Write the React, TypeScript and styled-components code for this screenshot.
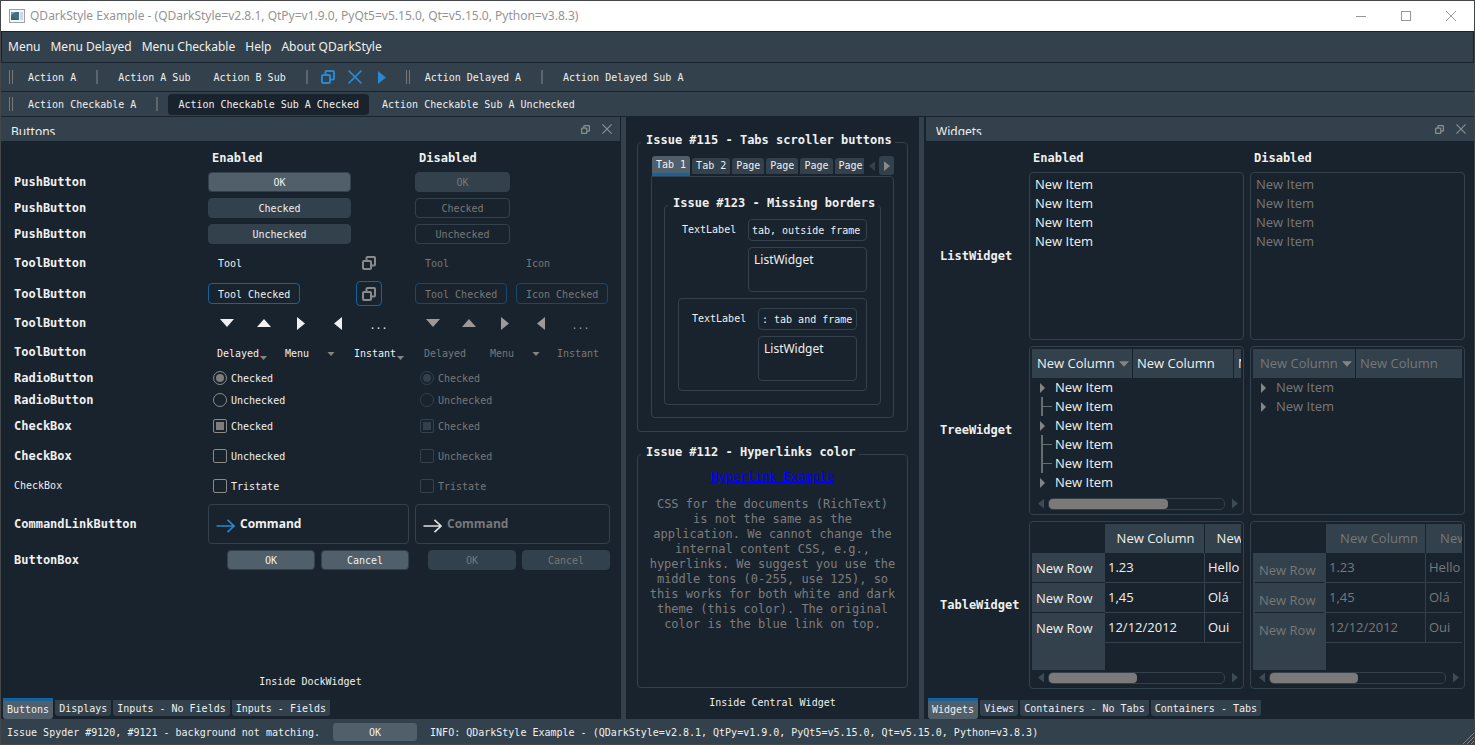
import React from "react";
import styled, { createGlobalStyle, css } from "styled-components";

const c = {
  bg: "#19232d",
  panel: "#32414b",
  raised: "#505f69",
  text: "#f0f0f0",
  muted: "#787878",
  blue: "#1464a0",
  bright: "#2a87d0",
  dimBlue: "#164870",
};

const mono = `"DejaVu Sans Mono", "Liberation Mono", monospace`;
const sans = `"Open Sans", "Noto Sans", sans-serif`;
const chromeSans = `"Noto Sans", "Open Sans", sans-serif`;

const GlobalStyle = createGlobalStyle`
  * { box-sizing: border-box; }
  body { margin: 0; background: ${c.bg}; }
  button, input { font: inherit; color: inherit; }
  ul { list-style: none; margin: 0; padding: 0; }
`;

const Window = styled.div`
  display: flex;
  flex-direction: column;
  min-height: 100vh;
  border: 1px solid #44474a;
  background: ${c.bg};
  color: ${c.text};
  font: 10px/16px ${mono};
`;

const TitleBar = styled.header`
  display: flex;
  align-items: center;
  height: 30px;
  padding: 0 1px 0 8px;
  gap: 5px;
  background: #fff;
  color: #949494;
  font: 12px/20px ${chromeSans};
`;

const WindowTitle = styled.h1`
  flex: 1;
  margin: 0;
  font: inherit;
  white-space: nowrap;
`;

const WindowControls = styled.div`
  display: flex;
`;

const WindowButton = styled.button`
  display: flex;
  align-items: center;
  justify-content: center;
  width: 45px;
  height: 30px;
  padding: 0;
  border: 0;
  background: none;
`;

const MenuBar = styled.nav`
  display: flex;
  align-items: center;
  gap: 10px;
  height: 32px;
  padding: 0 6px;
  border: 1px solid ${c.bg};
  background: ${c.panel};
  font: 12px/20px ${chromeSans};
`;

const MenuItem = styled.button`
  padding: 0;
  border: 0;
  background: none;
`;

const ToolBar = styled.div<{ $h: number }>`
  display: flex;
  align-items: center;
  gap: 3px;
  height: ${(p) => p.$h}px;
  padding-left: 1px;
  border-bottom: 1px solid ${c.bg};
  background: ${c.panel};
`;

const Handle = styled.span`
  width: 4px;
  height: 14px;
  margin: 0 2px 0 7px;
  border: solid #787878;
  border-width: 0 1px;
`;

const Separator = styled.span`
  width: 2px;
  height: 14px;
  margin: 0 7px;
  background: #5d666c;
`;

const Action = styled.button<{ $on?: boolean; $icon?: boolean }>`
  display: flex;
  align-items: center;
  justify-content: center;
  height: 21px;
  padding: ${(p) => (p.$icon ? "0 3px 0 0" : "2px 10px 0")};
  ${(p) => p.$icon && "width: 24px;"}
  border: 0;
  border-radius: 4px;
  background: ${(p) => (p.$on ? c.bg : "none")};
  color: ${(p) => (p.$icon ? c.bright : c.text)};
  white-space: nowrap;
`;

const Main = styled.main`
  flex: 1;
  display: grid;
  grid-template-columns: minmax(0, 620fr) 5px minmax(0, 293fr) 5px minmax(0, 550fr);
`;

const Splitter = styled.div`
  background: ${c.panel};
`;

const Dock = styled.section<{ $side: "left" | "right" }>`
  display: flex;
  flex-direction: column;
  padding: ${(p) => (p.$side === "left" ? "0 1px 0 0" : "0 0 0 2px")};
`;

const DockHeader = styled.header`
  display: flex;
  align-items: center;
  height: 24px;
  padding: 0 6px 0 10px;
  gap: 8px;
  background: ${c.panel};
  color: #8b8f8f;
`;

const DockTitle = styled.h2`
  flex: 1;
  align-self: flex-start;
  height: 18px;
  margin: 0;
  overflow: hidden;
  color: ${c.text};
  font: 12px/29px ${chromeSans};
`;

const BareButton = styled.button`
  display: flex;
  align-items: center;
  justify-content: center;
  width: 14px;
  height: 14px;
  padding: 0;
  border: 0;
  background: none;
`;

const ButtonsGrid = styled.div`
  display: grid;
  grid-template-columns: minmax(0, 188fr) minmax(0, 201fr) minmax(0, 195fr);
  grid-template-rows: 16px 20px 20px 20px 25px 25px 22px 24px 16px 16px 24px 24px 24px 40px 20px;
  gap: 6px;
  align-items: center;
  padding: 9px 10px 0 13px;
`;

const Bold = styled.span<{ $indent?: boolean }>`
  padding-left: ${(p) => (p.$indent ? 4 : 0)}px;
  font-size: 12px;
  font-weight: 700;
  white-space: nowrap;
`;

const Cell = styled.div<{ $end?: boolean; $muted?: boolean }>`
  display: flex;
  align-items: center;
  justify-content: ${(p) => (p.$end ? "flex-end" : "flex-start")};
  gap: 6px;
  min-width: 0;
  color: ${(p) => (p.$muted ? c.muted : c.text)};
`;

const PushButton = styled.button<{ $w: number; $kind?: "raised" | "flat" | "outline" }>`
  flex: 0 1 ${(p) => p.$w}px;
  height: 20px;
  padding: 2px 0 0;
  border: 1px solid ${c.panel};
  border-radius: 4px;
  background: ${(p) =>
    p.$kind === "raised" ? c.raised : p.$kind === "outline" ? "none" : c.panel};
  line-height: 16px;
`;

const ToolButton = styled.button<{ $checked?: boolean; $square?: boolean }>`
  display: flex;
  align-items: center;
  justify-content: center;
  height: ${(p) => (p.$square ? 25 : 21)}px;
  padding: ${(p) => (p.$square ? "0 5px" : "2px 9px 0")};
  border: 1px solid transparent;
  border-radius: 4px;
  background: none;
  white-space: nowrap;
  ${(p) => p.$checked && css`border-color: ${c.blue};`}
  &:disabled { ${(p) => p.$checked && css`border-color: ${c.dimBlue};`} }
  ${(p) => p.$square && "color: #8a8a8a;"}
`;

const ToolPair = styled(Cell)`
  display: grid;
  grid-template-columns: repeat(2, minmax(0, 1fr));
  justify-items: start;
  column-gap: 7px;
`;

const ToolSpread = styled(Cell)`
  justify-content: space-between;
  padding-right: 27px;
`;

const ArrowCell = styled.div<{ $col: number; $muted?: boolean }>`
  display: grid;
  grid-template-columns: repeat(4, ${(p) => p.$col}px) 1fr;
  justify-items: center;
  align-items: center;
  padding: 0 8px 0 0;
  color: ${(p) => (p.$muted ? "#9d9999" : c.text)};
`;

const Dots = styled.span`
  padding-top: 6px;
`;

const MenuCell = styled.div<{ $muted?: boolean }>`
  display: grid;
  grid-template-columns: minmax(0, 68fr) minmax(0, 69fr) minmax(0, 64fr);
  color: ${(p) => (p.$muted ? c.muted : c.text)};
`;

const MenuTool = styled.button<{ $wide?: boolean }>`
  display: flex;
  align-items: center;
  gap: ${(p) => (p.$wide ? 18 : 1)}px;
  height: 24px;
  padding: 4px 0 0 9px;
  border: 0;
  background: none;
  & > svg { color: #858585; ${(p) => !p.$wide && "align-self: flex-end; margin-bottom: 4px;"} }
`;

const Check = styled.label`
  display: flex;
  align-items: center;
  gap: 4px;
  padding-left: 5px;
`;

const CheckText = styled.span`
  padding-top: 1px;
`;

const Tick = styled.input`
  appearance: none;
  width: 14px;
  height: 14px;
  margin: 0;
  padding: 2px;
  border: 1px solid #8a8a88;
  border-radius: ${(p) => (p.type === "radio" ? "50%" : "2px")};
  background-clip: content-box;
  &:checked { background-color: #7d7d7a; }
  &:disabled { border-color: ${c.panel}; }
  &:disabled:checked { background-color: ${c.panel}; }
`;

const CommandButton = styled.button`
  display: flex;
  align-items: center;
  gap: 5px;
  width: 100%;
  height: 40px;
  padding: 0 7px;
  border: 1px solid ${c.panel};
  border-radius: 4px;
  background: none;
  font: 700 12px/16px ${sans};
  color: ${c.text};
  & > svg { color: ${c.bright}; margin-top: 3px; }
  &:disabled { color: ${c.muted}; }
  &:disabled > svg { color: #e0e0e0; }
`;

const Caption = styled.p`
  margin: 0;
  text-align: center;
`;

const DockCaption = styled(Caption)`
  margin: auto 0 8px;
`;

const TabBar = styled.div`
  display: flex;
  align-items: flex-start;
  gap: 2px;
  height: 21px;
  padding-left: 2px;
`;

const DockTab = styled.button<{ $on?: boolean }>`
  height: ${(p) => (p.$on ? 21 : 16)}px;
  margin-top: ${(p) => (p.$on ? 0 : 2)}px;
  padding: 0 4px;
  border: 0;
  border-top: ${(p) => (p.$on ? 3 : 0)}px solid ${c.blue};
  border-radius: 0 0 3px 3px;
  background: ${(p) => (p.$on ? c.raised : c.panel)};
  line-height: 18px;
  white-space: nowrap;
`;

const Central = styled.section`
  display: flex;
  flex-direction: column;
  padding: 15px 11px 8px;
`;

const Group = styled.fieldset<{ $grow?: boolean }>`
  ${(p) => p.$grow && "flex: 1;"}
  min-width: 0;
  margin: 0;
  padding: 4px 13px 13px;
  border: 1px solid ${c.panel};
  border-radius: 4px;
`;

const LinksGroup = styled(Group)`
  margin: 12px 0 7px;
  padding: 6px 9px;
`;

const RichText = styled.div`
  font-size: 12px;
  line-height: 15px;
  text-align: center;
`;

const Legend = styled.legend<{ $end: number }>`
  height: 20px;
  margin-left: -10px;
  padding: 0 ${(p) => p.$end}px 0 5px;
  font-size: 12px;
  font-weight: 700;
  line-height: 16px;
  white-space: nowrap;
`;

const LinksLegend = styled(Legend)`
  margin-left: -6px;
`;

const Link = styled.a`
  color: #0000ff;
`;

const Paragraph = styled.p`
  margin: 12px 0 0;
  color: #7d7d7d;
`;

const PageTabs = styled.div`
  display: flex;
  align-items: flex-end;
  height: 20px;
  padding-left: 1px;
`;

const PageTabClip = styled.div`
  display: flex;
  flex: 1;
  align-items: flex-end;
  gap: 2px;
  height: 20px;
  overflow: hidden;
`;

const PageTab = styled.button<{ $on?: boolean }>`
  flex: none;
  height: ${(p) => (p.$on ? 20 : 16)}px;
  margin-bottom: ${(p) => (p.$on ? 0 : 2)}px;
  padding: 0 4px;
  border: 0;
  border-bottom: ${(p) => (p.$on ? 3 : 0)}px solid ${c.blue};
  border-radius: 3px 3px 0 0;
  background: ${(p) => (p.$on ? c.raised : c.panel)};
  line-height: 16px;
`;

const Scroller = styled.button<{ $on?: boolean }>`
  display: flex;
  align-items: center;
  justify-content: center;
  width: 15px;
  height: 19px;
  margin-bottom: 1px;
  padding: 0;
  border: 0;
  border-radius: 3px;
  background: ${(p) => (p.$on ? c.panel : "none")};
  color: ${(p) => (p.$on ? "#8a8a8a" : c.panel)};
`;

const Pane = styled.div`
  padding: 18px 12px 12px;
  border: 1px solid ${c.panel};
  border-radius: 0 4px 4px 4px;
`;

const Form = styled.div<{ $framed?: boolean }>`
  display: grid;
  grid-template-columns: ${(p) => (p.$framed ? "60px" : "64px")} minmax(0, 1fr);
  gap: 6px;
  align-items: center;
`;

const FieldLabel = styled.label<{ $indent?: boolean }>`
  padding-left: ${(p) => (p.$indent ? 4 : 0)}px;
`;

const Frame = styled.div`
  grid-column: 1 / -1;
  padding: 9px 9px 9px 13px;
  border: 1px solid ${c.panel};
  border-radius: 4px;
`;

const LineEdit = styled.input`
  width: 100%;
  height: 22px;
  padding: 0 3px;
  border: 1px solid ${c.panel};
  border-radius: 4px;
  background: none;
`;

const MiniList = styled.ul`
  grid-column: 2;
  height: 45px;
  padding: 2px 5px;
  border: 1px solid ${c.panel};
  border-radius: 4px;
  font: 12px/20px ${chromeSans};
`;

const WidgetsGrid = styled.div`
  flex: 1;
  display: grid;
  grid-template-columns: 83px minmax(0, 1fr) minmax(0, 1fr);
  grid-template-rows: 16px repeat(3, minmax(168px, 1fr));
  gap: 6px;
  align-items: center;
  padding: 9px 9px 9px 14px;
`;

const ViewBox = styled.div<{ $muted?: boolean }>`
  display: flex;
  flex-direction: column;
  align-self: stretch;
  min-width: 0;
  padding: 2px;
  overflow: hidden;
  border: 1px solid ${c.panel};
  border-radius: 4px;
  color: ${(p) => (p.$muted ? c.muted : c.text)};
  font: 13px/19px ${sans};
`;

const Items = styled.ul`
  padding: 0 3px;
`;

const TreeHeader = styled.div`
  display: flex;
  flex: none;
  height: 29px;
  overflow: hidden;
  background: ${c.panel};
`;

const TreeColumn = styled.div<{ $w?: number; $pad: number }>`
  display: flex;
  flex: ${(p) => (p.$w ? `0 0 ${p.$w}px` : "1 0 100px")};
  align-items: center;
  justify-content: space-between;
  padding: 0 3px 0 ${(p) => p.$pad}px;
  border-right: ${(p) => (p.$w ? 1 : 0)}px solid ${c.bg};
  white-space: nowrap;
  & > svg { color: #858585; }
`;

const TreeItems = styled.ul`
  flex: 1;
`;

const TreeItem = styled.li`
  display: flex;
  align-items: center;
  gap: 3px;
  height: 19px;
  padding-left: 6px;
  & > svg { color: #858585; flex: none; }
`;

const ScrollRow = styled.div`
  display: flex;
  align-items: center;
  gap: 4px;
  height: 16px;
  padding: 0 3px 0 6px;
  color: #3c4c57;
`;

const Track = styled.div`
  flex: 1;
  height: 12px;
  margin-right: 3px;
  border: 1px solid ${c.panel};
  border-radius: 5px;
`;

const Thumb = styled.div<{ $size: number }>`
  width: ${(p) => p.$size}%;
  height: 10px;
  border-radius: 4px;
  background: #7c7a78;
`;

const TableClip = styled.div`
  flex: 1;
  min-height: 0;
  overflow: hidden;
`;

const Table = styled.table<{ $muted?: boolean }>`
  width: 273px;
  height: 100%;
  table-layout: fixed;
  border-spacing: 0;
  text-align: left;
  th, td { height: 30px; padding: 0 3px; font-weight: 400; white-space: nowrap; }
  thead th { height: 29px; background: ${c.panel}; text-align: center; border-right: 1px solid ${c.bg}; }
  thead th { padding-left: ${(p) => (p.$muted ? 10 : 5)}px; }
  thead td { height: 29px; }
  tbody th { padding: 0 ${(p) => (p.$muted ? 2 : 0)}px; background: ${c.panel}; }
  tbody td { border: solid ${c.panel}; border-width: 0 1px 1px 0; }
  tbody tr:last-child th, tbody tr:last-child td { height: auto; border: 0; }
`;

const RowHead = styled.div<{ $muted?: boolean; $last?: boolean }>`
  height: 30px;
  padding: ${(p) => (p.$muted ? 8 : 6)}px 4px 0;
  border-bottom: ${(p) => (p.$last ? 0 : 1)}px solid ${c.bg};
`;

const StatusBar = styled.footer`
  display: flex;
  align-items: center;
  gap: 12px;
  height: 25px;
  padding: 0 0 0 6px;
  background: ${c.panel};
  white-space: nowrap;
`;

const StatusText = styled.span`
  padding-top: 2px;
`;

const Grip = styled.svg`
  align-self: flex-end;
  margin-left: auto;
`;

const TriDown = ({ w = 14, h = 8 }: { w?: number; h?: number }) => (
  <svg width={w} height={h} viewBox="0 0 14 8"><path d="M0 0H14L7 8Z" fill="currentColor" /></svg>
);
const TriUp = () => (
  <svg width="14" height="8" viewBox="0 0 14 8"><path d="M0 8H14L7 0Z" fill="currentColor" /></svg>
);
const TriRight = ({ w = 8, h = 13 }: { w?: number; h?: number }) => (
  <svg width={w} height={h} viewBox="0 0 8 13"><path d="M0 0V13L8 6.5Z" fill="currentColor" /></svg>
);
const TriLeft = ({ w = 8, h = 13 }: { w?: number; h?: number }) => (
  <svg width={w} height={h} viewBox="0 0 8 13"><path d="M8 0V13L0 6.5Z" fill="currentColor" /></svg>
);
const Restore = ({ size = 14 }: { size?: number }) => (
  <svg width={size} height={size} viewBox="0 0 14 14" fill="none" stroke="currentColor" strokeWidth="2">
    <path d="M4.5 5V1.9Q4.5 1 5.4 1H12.1Q13 1 13 1.9V8.6Q13 9.5 12.1 9.5H9.5" />
    <rect x="1" y="5" width="8" height="8" rx="1" />
  </svg>
);
const Cross = ({ size = 14 }: { size?: number }) => (
  <svg width={size} height={size} viewBox="0 0 14 14" fill="none" stroke="currentColor" strokeWidth="1.7">
    <path d="M.6.6 13.4 13.4M13.4.6.6 13.4" />
  </svg>
);
const ArrowLong = () => (
  <svg width="19" height="14" viewBox="0 0 19 14" fill="none" stroke="currentColor" strokeWidth="1.6">
    <path d="M.5 7H18M11.5 .8 18 7 11.5 13.2" />
  </svg>
);
const Branch = () => (
  <svg width="14" height="19" viewBox="0 0 14 19" fill="none" stroke="#666c70">
    <path d="M4 0V19" strokeWidth="2" /><path d="M4 9.5H14" />
  </svg>
);
const Expander = () => (
  <svg width="14" height="10" viewBox="0 0 14 10"><path d="M2 0V10L7 5Z" fill="currentColor" /></svg>
);

const AppIcon = () => (
  <svg width="16" height="14" viewBox="0 0 16 14">
    <rect x=".5" y=".5" width="15" height="13" fill="#f2f4f6" stroke="#9aa2a8" />
    <rect x="2" y="3" width="8" height="8" fill="#3e6f86" />
    <path d="M2 11V7L10 11Z" fill="#3f6650" />
    <path d="M2 3H7L2 6Z" fill="#6f9fc4" />
    <rect x="11" y="3" width="3" height="8" fill="#d2d6dd" />
  </svg>
);

function ScrollBar({ size }: { size: number }) {
  return (
    <ScrollRow>
      <TriLeft w={6} h={11} />
      <Track><Thumb $size={size} /></Track>
      <TriRight w={6} h={11} />
    </ScrollRow>
  );
}

function DockHead({ title }: { title: string }) {
  return (
    <DockHeader>
      <DockTitle>{title}</DockTitle>
      <BareButton aria-label={`Float ${title}`}><Restore size={9} /></BareButton>
      <BareButton aria-label={`Close ${title}`}><Cross size={10} /></BareButton>
    </DockHeader>
  );
}

function DockTabs({ names }: { names: string[] }) {
  return (
    <TabBar>
      {names.map((n, i) => <DockTab key={n} $on={i === 0}>{n}</DockTab>)}
    </TabBar>
  );
}

function Arrows({ muted }: { muted?: boolean }) {
  return (
    <ArrowCell $col={muted ? 36 : 37} $muted={muted}>
      <TriDown /><TriUp /><TriRight /><TriLeft /><Dots>...</Dots>
    </ArrowCell>
  );
}

function Menus({ muted }: { muted?: boolean }) {
  return (
    <MenuCell $muted={muted}>
      <MenuTool disabled={muted}>Delayed{!muted && <TriDown w={7} h={4} />}</MenuTool>
      <MenuTool disabled={muted} $wide>Menu<TriDown w={8} h={4} /></MenuTool>
      <MenuTool disabled={muted}>Instant{!muted && <TriDown w={7} h={4} />}</MenuTool>
    </MenuCell>
  );
}

type TickRow = { label: string; type: "radio" | "checkbox"; text: string; on?: boolean; plain?: boolean };
const tickRows: TickRow[] = [
  { label: "RadioButton", type: "radio", text: "Checked", on: true },
  { label: "RadioButton", type: "radio", text: "Unchecked" },
  { label: "CheckBox", type: "checkbox", text: "Checked", on: true },
  { label: "CheckBox", type: "checkbox", text: "Unchecked" },
  { label: "CheckBox", type: "checkbox", text: "Tristate", plain: true },
];

function ButtonsDock() {
  return (
    <Dock $side="left">
      <DockHead title="Buttons" />
      <ButtonsGrid>
        <span /><Bold $indent>Enabled</Bold><Bold $indent>Disabled</Bold>

        <Bold>PushButton</Bold>
        <Cell><PushButton $w={143} $kind="raised">OK</PushButton></Cell>
        <Cell $muted><PushButton $w={95} disabled>OK</PushButton></Cell>
        {["Checked", "Unchecked"].map((t) => (
          <React.Fragment key={t}>
            <Bold>PushButton</Bold>
            <Cell><PushButton $w={143}>{t}</PushButton></Cell>
            <Cell $muted><PushButton $w={95} $kind="outline" disabled>{t}</PushButton></Cell>
          </React.Fragment>
        ))}

        <Bold>ToolButton</Bold>
        <ToolSpread>
          <ToolButton>Tool</ToolButton>
          <ToolButton $square aria-label="Icon"><Restore /></ToolButton>
        </ToolSpread>
        <ToolPair $muted>
          <ToolButton disabled>Tool</ToolButton>
          <ToolButton disabled>Icon</ToolButton>
        </ToolPair>

        <Bold>ToolButton</Bold>
        <ToolSpread>
          <ToolButton $checked>Tool Checked</ToolButton>
          <ToolButton $square $checked aria-label="Icon Checked"><Restore /></ToolButton>
        </ToolSpread>
        <ToolPair $muted>
          <ToolButton $checked disabled>Tool Checked</ToolButton>
          <ToolButton $checked disabled>Icon Checked</ToolButton>
        </ToolPair>

        <Bold>ToolButton</Bold><Arrows /><Arrows muted />
        <Bold>ToolButton</Bold><Menus /><Menus muted />

        {tickRows.map((r, i) => (
          <React.Fragment key={i}>
            {r.plain ? <span>{r.label}</span> : <Bold>{r.label}</Bold>}
            <Cell>
              <Check><Tick type={r.type} name={`${r.type}-on`} defaultChecked={r.on} /><CheckText>{r.text}</CheckText></Check>
            </Cell>
            <Cell $muted>
              <Check><Tick type={r.type} name={`${r.type}-off`} defaultChecked={r.on} disabled /><CheckText>{r.text}</CheckText></Check>
            </Cell>
          </React.Fragment>
        ))}

        <Bold>CommandLinkButton</Bold>
        <CommandButton><ArrowLong />Command</CommandButton>
        <CommandButton disabled><ArrowLong />Command</CommandButton>

        <Bold>ButtonBox</Bold>
        <Cell $end>
          <PushButton $w={88} $kind="raised">OK</PushButton>
          <PushButton $w={88} $kind="raised">Cancel</PushButton>
        </Cell>
        <Cell $end $muted>
          <PushButton $w={88} disabled>OK</PushButton>
          <PushButton $w={88} disabled>Cancel</PushButton>
        </Cell>
      </ButtonsGrid>
      <DockCaption>Inside DockWidget</DockCaption>
      <DockTabs names={["Buttons", "Displays", "Inputs - No Fields", "Inputs - Fields"]} />
    </Dock>
  );
}

function CentralWidget() {
  return (
    <Central>
      <Group>
        <Legend $end={3}>Issue #115 - Tabs scroller buttons</Legend>
        <PageTabs>
          <PageTabClip>
            <PageTab $on>Tab 1</PageTab>
            <PageTab>Tab 2</PageTab>
            <PageTab>Page</PageTab>
            <PageTab>Page</PageTab>
            <PageTab>Page</PageTab>
            <PageTab>Page</PageTab>
          </PageTabClip>
          <Scroller aria-label="Scroll tabs left"><TriLeft w={6} h={10} /></Scroller>
          <Scroller $on aria-label="Scroll tabs right"><TriRight w={6} h={10} /></Scroller>
        </PageTabs>
        <Pane>
          <Group>
            <Legend $end={3}>Issue #123 - Missing borders</Legend>
            <Form>
              <FieldLabel $indent htmlFor="outside">TextLabel</FieldLabel>
              <LineEdit id="outside" defaultValue="tab, outside frame" />
              <MiniList><li>ListWidget</li></MiniList>
              <Frame>
                <Form $framed>
                  <FieldLabel htmlFor="inside">TextLabel</FieldLabel>
                  <LineEdit id="inside" defaultValue=": tab and frame" />
                  <MiniList><li>ListWidget</li></MiniList>
                </Form>
              </Frame>
            </Form>
          </Group>
        </Pane>
      </Group>
      <LinksGroup $grow>
        <LinksLegend $end={3}>Issue #112 - Hyperlinks color</LinksLegend>
        <RichText>
          <Link href="#">Hyperlink Example</Link>
          <Paragraph>
            CSS for the documents (RichText) is not the same as the application. We cannot change
            the internal content CSS, e.g., hyperlinks. We suggest you use the middle tons (0-255,
            use 125), so this works for both white and dark theme (this color). The original color
            is the blue link on top.
          </Paragraph>
        </RichText>
      </LinksGroup>
      <Caption>Inside Central Widget</Caption>
    </Central>
  );
}

function ListView({ muted }: { muted?: boolean }) {
  return (
    <ViewBox $muted={muted}>
      <Items>{[0, 1, 2, 3].map((i) => <li key={i}>New Item</li>)}</Items>
    </ViewBox>
  );
}

function TreeView({ branches, muted }: { branches: boolean[]; muted?: boolean }) {
  return (
    <ViewBox $muted={muted}>
      <TreeHeader>
        <TreeColumn $w={muted ? 103 : 101} $pad={muted ? 7 : 5}>New Column<TriDown w={10} h={6} /></TreeColumn>
        <TreeColumn $w={muted ? undefined : 101} $pad={4}>New Column</TreeColumn>
        {!muted && <TreeColumn $pad={4}>New Column</TreeColumn>}
      </TreeHeader>
      <TreeItems>
        {branches.map((b, i) => (
          <TreeItem key={i}>{b ? <Expander /> : <Branch />}New Item</TreeItem>
        ))}
      </TreeItems>
      {!muted && <ScrollBar size={68} />}
    </ViewBox>
  );
}

const tableRows = [["1.23", "Hello"], ["1,45", "Olá"], ["12/12/2012", "Oui"]];

function TableView({ muted }: { muted?: boolean }) {
  return (
    <ViewBox $muted={muted}>
      <TableClip>
        <Table $muted={muted}>
          <colgroup><col width="73" /><col width="100" /><col width="100" /></colgroup>
          <thead>
            <tr><td /><th scope="col">New Column</th><th scope="col">New Column</th></tr>
          </thead>
          <tbody>
            {tableRows.map((r, i) => (
              <tr key={i}>
                <th scope="row"><RowHead $muted={muted} $last={i === 2}>New Row</RowHead></th>
                <td>{r[0]}</td><td>{r[1]}</td>
              </tr>
            ))}
            <tr><th /><td /><td /></tr>
          </tbody>
        </Table>
      </TableClip>
      <ScrollBar size={50} />
    </ViewBox>
  );
}

function WidgetsDock() {
  return (
    <Dock $side="right">
      <DockHead title="Widgets" />
      <WidgetsGrid>
        <span /><Bold $indent>Enabled</Bold><Bold $indent>Disabled</Bold>
        <Bold>ListWidget</Bold><ListView /><ListView muted />
        <Bold>TreeWidget</Bold>
        <TreeView branches={[true, false, true, false, false, true]} />
        <TreeView branches={[true, true]} muted />
        <Bold>TableWidget</Bold><TableView /><TableView muted />
      </WidgetsGrid>
      <DockTabs names={["Widgets", "Views", "Containers - No Tabs", "Containers - Tabs"]} />
    </Dock>
  );
}

const version = "QDarkStyle Example - (QDarkStyle=v2.8.1, QtPy=v1.9.0, PyQt5=v5.15.0, Qt=v5.15.0, Python=v3.8.3)";

export default function App() {
  return (
    <>
      <GlobalStyle />
      <Window>
        <TitleBar>
          <AppIcon />
          <WindowTitle>{version}</WindowTitle>
          <WindowControls>
            <WindowButton aria-label="Minimize">
              <svg width="10" height="10" stroke="#999"><path d="M0 5.5H10" /></svg>
            </WindowButton>
            <WindowButton aria-label="Maximize">
              <svg width="10" height="10" stroke="#999" fill="none"><rect x=".5" y=".5" width="9" height="9" /></svg>
            </WindowButton>
            <WindowButton aria-label="Close">
              <svg width="10" height="10" stroke="#999"><path d="M0 0 10 10M10 0 0 10" /></svg>
            </WindowButton>
          </WindowControls>
        </TitleBar>
        <MenuBar>
          {["Menu", "Menu Delayed", "Menu Checkable", "Help", "About QDarkStyle"].map((m) => (
            <MenuItem key={m}>{m}</MenuItem>
          ))}
        </MenuBar>
        <ToolBar $h={29}>
          <Handle />
          <Action>Action A</Action>
          <Separator />
          <Action>Action A Sub</Action>
          <Action>Action B Sub</Action>
          <Separator />
          <Action $icon aria-label="Restore"><Restore /></Action>
          <Action $icon aria-label="Close"><Cross /></Action>
          <Action $icon aria-label="Run"><TriRight /></Action>
          <Handle />
          <Action>Action Delayed A</Action>
          <Separator />
          <Action>Action Delayed Sub A</Action>
        </ToolBar>
        <ToolBar $h={25}>
          <Handle />
          <Action>Action Checkable A</Action>
          <Separator />
          <Action $on>Action Checkable Sub A Checked</Action>
          <Action>Action Checkable Sub A Unchecked</Action>
        </ToolBar>
        <Main>
          <ButtonsDock />
          <Splitter />
          <CentralWidget />
          <Splitter />
          <WidgetsDock />
        </Main>
        <StatusBar>
          <StatusText>Issue Spyder #9120, #9121 - background not matching.</StatusText>
          <PushButton $w={86} $kind="raised">OK</PushButton>
          <StatusText>INFO: {version}</StatusText>
          <Grip width="12" height="12" stroke="#7d8488"><path d="M1 12 12 1M5 12 12 5M9 12 12 9" /></Grip>
        </StatusBar>
      </Window>
    </>
  );
}
